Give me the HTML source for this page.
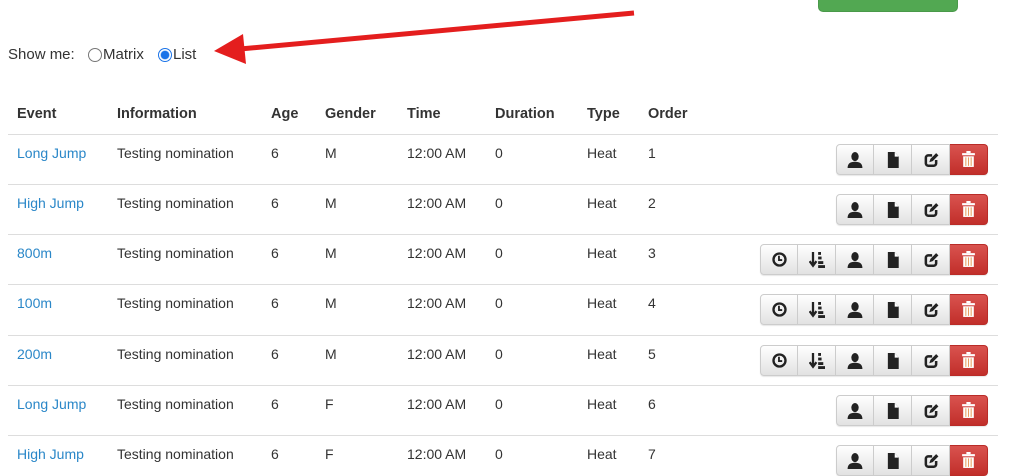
<!DOCTYPE html>
<html><head><meta charset="utf-8"><style>
*{margin:0;padding:0;box-sizing:border-box}
body{width:1018px;height:456px;overflow:hidden;background:#fff;font-family:"Liberation Sans",Arial,sans-serif;font-size:14px;color:#333;position:relative}
.a{position:absolute;white-space:nowrap}
.h{font-weight:bold;font-size:14.5px}
.line{position:absolute;left:8px;width:990px;height:1px;background:#ddd}
.lk{color:#2a87c8}
.bg{position:absolute;height:31px;display:flex;border-radius:4px;box-shadow:0 1px 1px rgba(0,0,0,.1)}
.b{width:38px;height:31px;border:1px solid #ccc;border-left:none;background:linear-gradient(#fff,#e2e2e2);display:flex;align-items:center;justify-content:center}
.b:first-child{border-left:1px solid #ccc;border-radius:4px 0 0 4px}
.b.r{background:linear-gradient(#d9534f,#c12e2a);border-color:#b92c28;border-radius:0 4px 4px 0}
.rad{position:absolute;width:14px;height:14px;border-radius:50%;border:1px solid #777}
.rad.on{border:1px solid #1a73e8;background:radial-gradient(circle,#1a73e8 3.8px,#fff 4.8px)}
.s{font-size:15px}
</style></head><body>
<div class="a" style="left:818px;top:-6px;width:140px;height:18px;background:#52a852;border-radius:5px;border:1px solid #4a994a"></div>
<div class="a s" style="left:8px;top:46px">Show me:</div>
<span class="rad" style="left:88px;top:48px"></span>
<div class="a s" style="left:103px;top:46px">Matrix</div>
<span class="rad on" style="left:158px;top:48px"></span>
<div class="a s" style="left:173px;top:46px">List</div>
<svg class="a" style="left:0;top:0" width="1018" height="80"><line x1="634" y1="13" x2="240" y2="49" stroke="#e41e1e" stroke-width="5"/><polygon points="214,51 243,34 246,64" fill="#e41e1e"/></svg>
<div class="a h" style="left:17px;top:106px">Event</div>
<div class="a h" style="left:117px;top:106px">Information</div>
<div class="a h" style="left:271px;top:106px">Age</div>
<div class="a h" style="left:325px;top:106px">Gender</div>
<div class="a h" style="left:407px;top:106px">Time</div>
<div class="a h" style="left:495px;top:106px">Duration</div>
<div class="a h" style="left:587px;top:106px">Type</div>
<div class="a h" style="left:648px;top:106px">Order</div>
<div id="rows"></div>
<script>
var d=[["Long Jump","M",1,0],["High Jump","M",2,0],["800m","M",3,1],["100m","M",4,1],["200m","M",5,1],["Long Jump","F",6,0],["High Jump","F",7,0]];
var tops=[134,184,234,284,335,385,435];
var I={
clock:'<svg width="15" height="15" viewBox="0 0 14 14"><circle cx="7" cy="7" r="5.6" fill="none" stroke="#222" stroke-width="2.2"/><path d="M6.5 3.5v4h3" fill="none" stroke="#222" stroke-width="1.7"/></svg>',
sort:'<svg width="16" height="16" viewBox="0 0 14 14"><path d="M3.5 0v11M0.5 8l3 4 3-4" fill="none" stroke="#222" stroke-width="2"/><rect x="8" y="0" width="2.5" height="2.5" fill="#222"/><rect x="8" y="4" width="3" height="2.5" fill="#222"/><rect x="8" y="8" width="4.5" height="2.5" fill="#222"/><rect x="8" y="11.5" width="6" height="2.5" fill="#222"/></svg>',
user:'<svg width="16" height="16" viewBox="0 0 14 14"><ellipse cx="7" cy="4" rx="3.2" ry="4" fill="#222"/><path d="M0.5 14c0-4 2.5-5.5 6.5-5.5s6.5 1.5 6.5 5.5z" fill="#222"/></svg>',
file:'<svg width="16" height="16" viewBox="0 0 14 14"><path d="M2.5 0h6l3.5 4v10H2.5z" fill="#222"/><path d="M8.5 0v4h3.5" fill="#fff"/></svg>',
edit:'<svg width="16" height="16" viewBox="0 0 14 14"><path d="M8 3H4.5a2 2 0 0 0-2 2v5a2 2 0 0 0 2 2h5a2 2 0 0 0 2-2V7" fill="none" stroke="#222" stroke-width="2.2"/><path d="M5.5 9l1-3 5-5 2 2-5 5z" fill="#222"/></svg>',
trash:'<svg width="15" height="17" viewBox="0 0 14 16"><rect x="5" y="0" width="4" height="2" fill="#fff"/><rect x="1" y="2" width="12" height="2" fill="#fff"/><path d="M2 5h10v10H2z" fill="#fff"/><path d="M4.5 6v8M7 6v8M9.5 6v8" stroke="#e8a060" stroke-width="1"/></svg>'};
var h='';
d.forEach(function(r,i){var t=tops[i];
h+='<div class="line" style="top:'+t+'px"></div>';
var y=t+11;
h+='<div class="a lk" style="left:17px;top:'+y+'px">'+r[0]+'</div>';
h+='<div class="a" style="left:117px;top:'+y+'px">Testing nomination</div>';
h+='<div class="a" style="left:271px;top:'+y+'px">6</div>';
h+='<div class="a" style="left:325px;top:'+y+'px">'+r[1]+'</div>';
h+='<div class="a" style="left:407px;top:'+y+'px">12:00 AM</div>';
h+='<div class="a" style="left:495px;top:'+y+'px">0</div>';
h+='<div class="a" style="left:587px;top:'+y+'px">Heat</div>';
h+='<div class="a" style="left:648px;top:'+y+'px">'+r[2]+'</div>';
var bs=(r[3]?['clock','sort']:[]).concat(['user','file','edit']);
var left=r[3]?760:836;
h+='<div class="bg" style="left:'+left+'px;top:'+(t+10)+'px">';
bs.forEach(function(b){h+='<div class="b">'+I[b]+'</div>'});
h+='<div class="b r">'+I.trash+'</div></div>';
});
document.getElementById('rows').innerHTML=h;
</script>
</body></html>
